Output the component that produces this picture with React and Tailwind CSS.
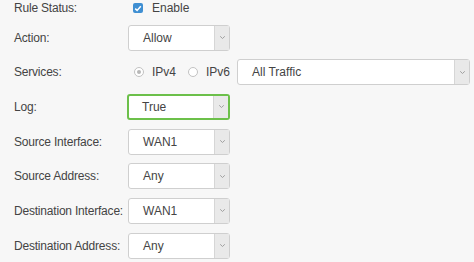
import React from 'react';

function Chevron() {
  return (
    <svg width="7" height="5" viewBox="0 0 7 5" fill="none">
      <path d="M1.2 1.3 L3.5 3.5 L5.8 1.3" stroke="#a0a0a0" strokeWidth="1" />
    </svg>
  );
}

function Select({ value, className = '', active = false }) {
  return (
    <div
      className={`flex h-[26px] items-stretch rounded-[3px] bg-white ${
        active ? 'border-2 border-[#6cc04a]' : 'border border-[#cfcfcf]'
      } ${className}`}
    >
      <div className={`flex flex-1 items-center text-[12px] text-[#444] ${active ? 'pl-[13px]' : 'pl-[14px]'}`}>{value}</div>
      <div className="flex w-[15px] items-center justify-center border-l border-[#d6d6d6] bg-[#e9e9e9]">
        <Chevron />
      </div>
    </div>
  );
}

function Radio({ checked }) {
  return (
    <span className="flex h-[10px] w-[10px] items-center justify-center rounded-full border border-[#c2c2c2] bg-white">
      {checked && <span className="h-[4px] w-[4px] rounded-full bg-[#b8b8b8]" />}
    </span>
  );
}

function Row({ label, children, h = 'h-[26px]' }) {
  return (
    <div className={`flex ${h} items-center`}>
      <div className="w-[114px] shrink-0 text-[12px] tracking-[-0.2px] text-[#444]">{label}</div>
      <div className="flex flex-1 items-center">{children}</div>
    </div>
  );
}

export default function App() {
  return (
    <div
      className="flex h-[262px] w-[474px] flex-col gap-[8.67px] overflow-hidden bg-[#f7f7f7] pl-[14px] pr-[4px]"
      style={{ fontFamily: '"Liberation Sans", Arial, sans-serif' }}
    >
      <Row label="Rule Status:" h="h-[16px]">
        <span className="ml-[5px] flex h-[10px] w-[10px] items-center justify-center rounded-[2px] bg-[#3f8fd2]">
          <svg width="8" height="7" viewBox="0 0 8 7" fill="none">
            <path d="M1.2 3.6 L3.1 5.4 L6.8 1.3" stroke="#fff" strokeWidth="1.5" />
          </svg>
        </span>
        <span className="ml-[9px] text-[12px] text-[#444]">Enable</span>
      </Row>
      <Row label="Action:">
        <Select value="Allow" className="w-[102px]" />
      </Row>
      <Row label="Services:">
        <span className="ml-[6px]"><Radio checked /></span>
        <span className="ml-[8px] text-[12px] text-[#444]">IPv4</span>
        <span className="ml-[12px]"><Radio /></span>
        <span className="ml-[8px] text-[12px] text-[#444]">IPv6</span>
        <Select value="All Traffic" className="ml-[7px] flex-1" />
      </Row>
      <Row label="Log:">
        <Select value="True" className="-ml-[1px] w-[103px]" active />
      </Row>
      <Row label="Source Interface:">
        <Select value="WAN1" className="w-[102px]" />
      </Row>
      <Row label="Source Address:">
        <Select value="Any" className="w-[102px]" />
      </Row>
      <Row label="Destination Interface:">
        <Select value="WAN1" className="w-[102px]" />
      </Row>
      <Row label="Destination Address:">
        <Select value="Any" className="w-[102px]" />
      </Row>
    </div>
  );
}
